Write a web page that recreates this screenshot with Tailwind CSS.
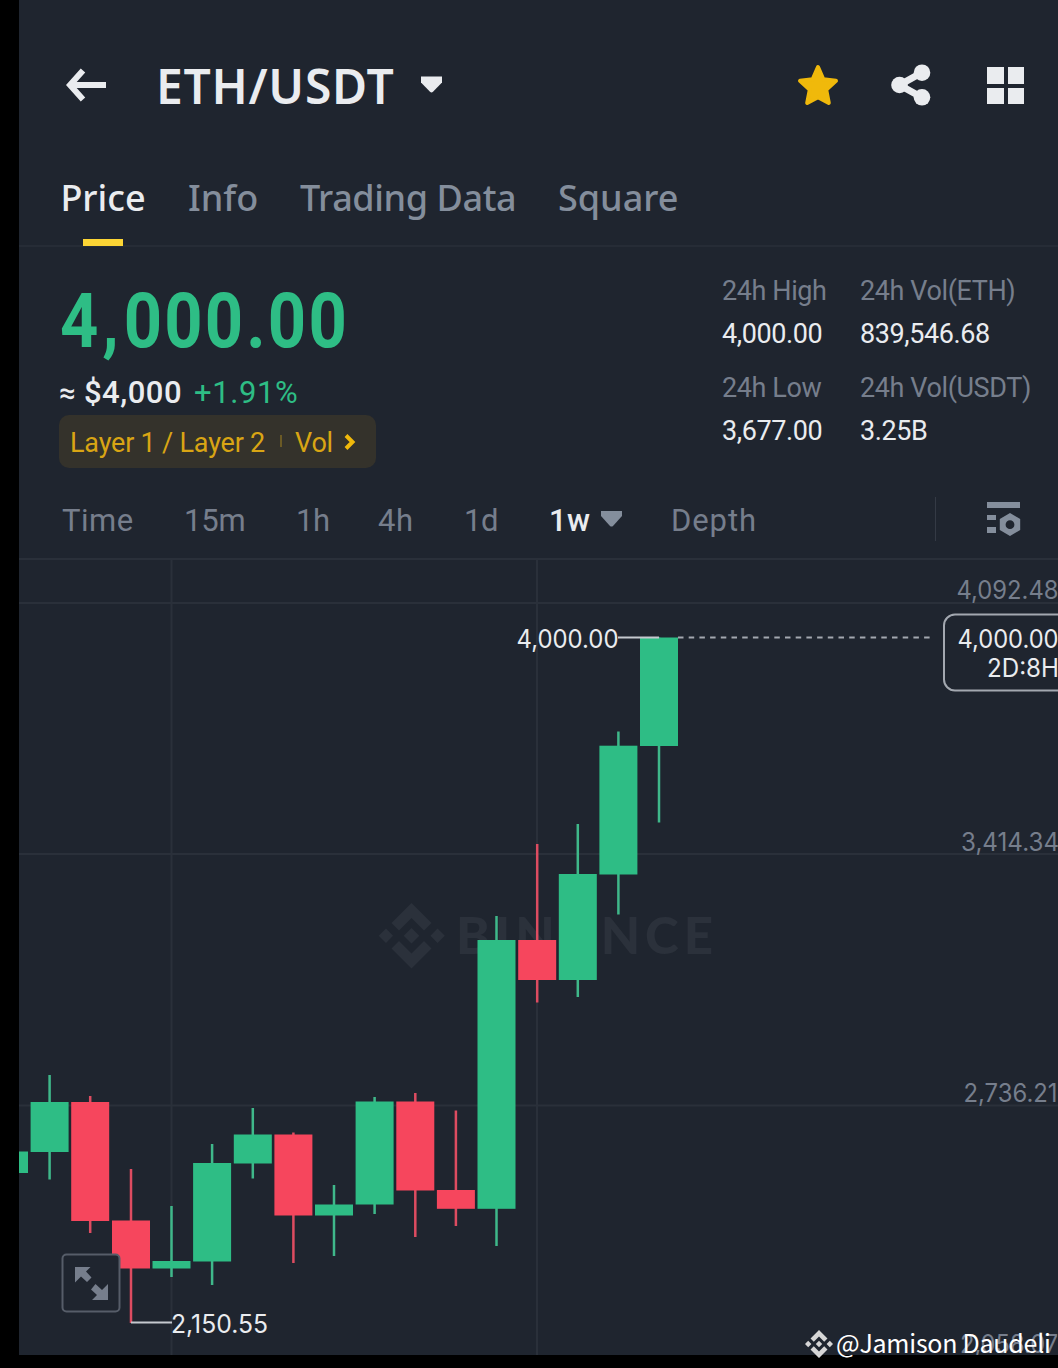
<!DOCTYPE html>
<html lang="en">

<head>
    <meta charset="UTF-8">
    <meta name="viewport" content="width=device-width, initial-scale=1.0">
    <title>ETH/USDT</title>
    <script src="https://cdn.jsdelivr.net/npm/@tailwindcss/browser@4"></script>
</head>

<body class="bg-black h-[1368px] overflow-hidden font-['Roboto',sans-serif]">
    <main class="ml-[19px] w-[1039px] h-[1355px] bg-[#1f252f] overflow-hidden">
        <!-- Header -->
        <header class="h-[172px] flex items-center pl-[47px] pr-[34px]">
            <svg class="w-[41px] h-[34px] -mt-[3px]" viewBox="0 0 41 34" fill="none" stroke="#eaecef" stroke-width="6">
                <path d="M40 17H4M17 2.500L4 17l13 14.500" />
            </svg>
            <h1 class="ml-[49px] w-[238px] text-[48px] leading-none font-semibold tracking-[0.700px] text-[#eaecef] font-['Noto_Sans',sans-serif]">ETH/USDT</h1>
            <svg class="ml-[27px] w-[22px] h-[17px] -mt-[3px]" viewBox="0 0 22 17" fill="#eaecef">
                <path d="M0 .5h21v6L12 15.8q-1.500 1.200-3 0L0 6.500z" />
            </svg>
            <div class="ml-auto flex items-center">
                <svg class="w-[42px] h-[42px] -mt-[2px]" viewBox="0 0 42 42" fill="#f0b90b" stroke="#f0b90b" stroke-width="4" stroke-linejoin="round">
                    <path d="M21 3l5.300 12.300L39 16.800l-9.800 8.900L31.800 39 21 33.200 10.200 39l2.600-13.300L3 16.800l12.700-1.500z" />
                </svg>
                <svg class="ml-[52px] w-[40px] h-[42px] -mt-[2px]" viewBox="0 0 40 42" fill="#eaecef">
                    <path d="M8.500 21L31 8.500M8.500 21L31 33.500" stroke="#eaecef" stroke-width="7" />
                    <circle cx="8.500" cy="21" r="8.300" />
                    <circle cx="31" cy="8.700" r="8.300" />
                    <circle cx="31" cy="33.300" r="8.300" />
                </svg>
                <div class="ml-[56px] -mt-[1px] grid grid-cols-2 gap-1">
                    <i class="size-[16.500px] bg-[#eaecef]"></i>
                    <i class="size-[16.500px] bg-[#eaecef]"></i>
                    <i class="size-[16.500px] bg-[#eaecef]"></i>
                    <i class="size-[16.500px] bg-[#eaecef]"></i>
                </div>
            </div>
        </header>

        <!-- Tabs -->
        <nav class="h-[75px] flex gap-[42px] pl-[41px] border-b-2 border-[#262c36] text-[36px] leading-[52px] font-medium text-[#848e9c] font-['Noto_Sans',sans-serif]">
            <div class="h-[74px] w-[86px] flex flex-col items-center justify-between text-[#eaecef]">
                <span>Price</span>
                <i class="w-10 h-[7px] bg-[#fcd535]"></i>
            </div>
            <span class="w-[70px]">Info</span>
            <span class="w-[216px] whitespace-nowrap tracking-[-0.400px]">Trading Data</span>
            <span>Square</span>
        </nav>

        <!-- Quote -->
        <section class="h-[233px] flex justify-between pl-10">
            <div class="w-[317px] pt-[34px]">
                <div class="ml-px w-[340px] origin-left scale-x-88 text-[76px] leading-[80px] font-bold tracking-[2.500px] text-[#2ebd85]">4<span class="ml-[2px] mr-[3px]">,</span>000<span class="ml-px">.</span>00</div>
                <div class="mt-[14px] flex items-center text-[31px] leading-[36px]">
                    <span class="w-[17px] text-[29px] font-medium text-[#eaecef]">≈</span>
                    <span class="ml-[8px] w-[98px] font-medium tracking-[0.500px] text-[#eaecef]">$4,000</span>
                    <span class="ml-[12px] tracking-[0.600px] text-[#2ebd85]">+1.91%</span>
                </div>
                <div class="mt-[4px] w-[317px] h-[53px] flex items-center pt-[3px] pl-[11px] rounded-[10px] bg-[#34322b] text-[27px] tracking-[-0.200px] text-[#d9a514]">
                    <span class="w-[196px] whitespace-nowrap">Layer 1 / Layer 2</span>
                    <i class="ml-[14px] -mt-[4px] w-0.5 h-3 bg-[#6b5a25]"></i>
                    <span class="ml-[13px] w-[38px]">Vol</span>
                    <svg class="ml-[11px] -mt-[3px] w-[12px] h-[16px]" viewBox="0 0 12 16" fill="none" stroke="#f0b90b" stroke-width="4">
                        <path d="M2 1.500L8.500 8 2 14.500" />
                    </svg>
                </div>
            </div>
            <dl class="w-[336px] pt-[27px] grid grid-cols-[138px_1fr] grid-rows-[97px_97px] text-[27px] leading-[34px] tracking-[-0.400px] whitespace-nowrap">
                <div>
                    <dt class="text-[#767e8c]">24h High</dt>
                    <dd class="mt-[9px] text-[#eaecef]">4,000.00</dd>
                </div>
                <div>
                    <dt class="text-[#767e8c]">24h Vol(ETH)</dt>
                    <dd class="mt-[9px] text-[#eaecef]">839,546.68</dd>
                </div>
                <div>
                    <dt class="text-[#767e8c]">24h Low</dt>
                    <dd class="mt-[9px] text-[#eaecef]">3,677.00</dd>
                </div>
                <div>
                    <dt class="text-[#767e8c]">24h Vol(USDT)</dt>
                    <dd class="mt-[9px] text-[#eaecef]">3.25B</dd>
                </div>
            </dl>
        </section>

        <!-- Intervals -->
        <nav class="h-[78px] flex items-center pl-[43px] pr-[37px] text-[31px] text-[#767e8c] tracking-[0.500px]">
            <span class="mt-1 w-[122px]">Time</span>
            <span class="mt-1 w-[112px] tracking-[-0.200px]">15m</span>
            <span class="mt-1 w-[82px] tracking-[-0.500px]">1h</span>
            <span class="mt-1 w-[86px]">4h</span>
            <span class="mt-1 w-[85px] tracking-[-0.500px]">1d</span>
            <span class="mt-1 w-[52px] font-medium text-[#eaecef]">1w</span>
            <svg class="w-[21px] h-[16px]" viewBox="0 0 21 16" fill="#848e9c">
                <path d="M0 0h21v5L12 15q-1.500 1.200-3 0L0 5z" />
            </svg>
            <span class="mt-1 ml-[49px] tracking-[0.900px]">Depth</span>
            <i class="ml-auto mr-[51px] w-px h-11 bg-[#343a45]"></i>
            <svg class="w-[34px] h-[34px]" viewBox="0 0 34 34" fill="#848e9c">
                <path d="M0 0h33v6H0zM0 13h9v5H0zM0 25h9v6H0z" />
                <path fill-rule="evenodd" d="M23 11l10.200 6v11L23 34l-10.200-6V17zM23 18.300a4.400 4.400 0 100 8.800 4.400 4.400 0 000-8.800z" />
            </svg>
        </nav>

        <!-- Chart -->
        <svg class="block w-[1039px] h-[797px]" viewBox="19 558 1039 797">
            <g stroke="#2a303a" stroke-width="2">
                <path d="M19 559H1058M19 603H1058M19 854H1058M19 1105.500H1058M171.500 558V1355M537 558V1355" />
            </g>
            <g fill="#2b313b">
                <path d="M411.500 903l20 20-7.500 7.500-12.500-12.500-12.500 12.500-7.500-7.500zM411.500 968.500l20-20-7.500-7.500-12.500 12.500-12.500-12.500-7.500 7.500zM411.500 928l7.800 7.800-7.800 7.800-7.800-7.800zM386 928.500l7 7.300-7 7.300-7.300-7.300zM437.500 928.500l7.300 7.300-7.300 7.300-7-7.300z" />
                <text x="456" y="954" textLength="257" font-family="Lato, sans-serif" font-weight="900" font-size="51">BINANCE</text>
            </g>
            <g id="candles"></g>
            <g font-family="Inter, sans-serif" font-size="25" fill="#767e8c">
                <text x="956.500" y="599" textLength="102" lengthAdjust="spacingAndGlyphs">4,092.48</text>
                <text x="961" y="850.500" textLength="98" lengthAdjust="spacingAndGlyphs">3,414.34</text>
                <text x="963.500" y="1101.500" textLength="94" lengthAdjust="spacingAndGlyphs">2,736.21</text>
                <text x="960" y="1353" textLength="98" lengthAdjust="spacingAndGlyphs">2,058.07</text>
            </g>
            <!-- Last price -->
            <path d="M678 637.500H932" stroke="#a3a8b0" stroke-width="1.800" stroke-dasharray="5.500 5.200" />
            <rect x="944" y="614.500" width="150" height="76" rx="11" fill="#1f252f" stroke="#a3a8b0" stroke-width="2" />
            <path d="M618 637.500H659M131 1322.500H172" stroke="#c5c9cf" stroke-width="1.800" />
            <g font-family="Inter, sans-serif" font-size="25" fill="#eaecef">
                <text x="957.500" y="647.500" textLength="101" lengthAdjust="spacingAndGlyphs">4,000.00</text>
                <text x="987" y="677" textLength="72" lengthAdjust="spacingAndGlyphs">2D:8H</text>
                <text x="516.500" y="647.500" textLength="102" lengthAdjust="spacingAndGlyphs">4,000.00</text>
                <text x="171" y="1333" textLength="97" lengthAdjust="spacingAndGlyphs">2,150.55</text>
            </g>
            <!-- Expand button -->
            <rect x="62.500" y="1254.500" width="57" height="57" rx="4" fill="#1f252f" stroke="#565d69" stroke-width="2" />
            <g fill="#767e8c">
                <path d="M75 1267h15.500l-4.500 4.500 5.500 6-4.500 4.500-6-5.500-6 6z" />
                <path d="M108 1300H92l5-5-6-5.500 4.500-5.500 6.500 6 6-6z" />
            </g>
        </svg>
    </main>

    <!-- Author mark -->
    <div class="absolute right-0 bottom-0 w-[253px] h-[48px] flex items-center text-white">
        <svg class="w-[28px] h-[28px] shrink-0" viewBox="0 0 28 28" fill="#d6d6d6">
            <path d="M14 0l8.500 8.500-3.300 3.300L14 6.600l-5.200 5.200-3.300-3.300zM14 28l8.500-8.500-3.300-3.300-5.200 5.200-5.200-5.200-3.300 3.300zM14 10.800l3.200 3.200-3.200 3.200-3.200-3.200zM3.200 10.800L6.400 14l-3.200 3.200L0 14zM24.800 10.800L28 14l-3.200 3.200-3.200-3.200z" />
        </svg>
        <span class="ml-[3px] -mt-[3px] text-[25px] leading-none tracking-[-0.250px] whitespace-nowrap font-['Noto_Sans_CJK_SC',sans-serif]">@Jamison Daudeli</span>
    </div>

    <script>
        // centre x, high, body top, body bottom, low, rising
        const candles = [
            [9, 1151.5, 1151.5, 1173, 1173, true],
            [49.6, 1075, 1102, 1152, 1179.5, true],
            [90.2, 1096, 1102, 1221, 1233, false],
            [131, 1169, 1220.5, 1268.5, 1323, false],
            [171.5, 1206, 1261, 1268.5, 1277, true],
            [212.1, 1144, 1163, 1261.5, 1285, true],
            [252.8, 1108, 1134.5, 1163.5, 1178.5, true],
            [293.4, 1132.5, 1134.5, 1215.5, 1263, false],
            [334, 1185, 1204.5, 1215.5, 1256, true],
            [374.6, 1097, 1101.5, 1204.5, 1214, true],
            [415.3, 1093, 1101.5, 1190.5, 1237, false],
            [455.9, 1110.5, 1190, 1208.8, 1226, false],
            [496.5, 916, 940, 1208.8, 1246, true],
            [537.2, 844, 940, 980, 1002.5, false],
            [577.8, 824, 874, 980, 997, true],
            [618.4, 731.5, 745.7, 874.5, 914.5, true],
            [659, 637.5, 637.5, 746, 822.5, true]
        ];

        document.getElementById('candles').innerHTML = candles.map(([x, high, top, bottom, low, up]) => `
            <rect x="${x - 1.25}" y="${high}" width="2.5" height="${low - high}" fill="${up ? '#3fb88a' : '#dd4c61'}" />
            <rect x="${x - 19}" y="${top}" width="38" height="${bottom - top}" fill="${up ? '#2ebd85' : '#f6465d'}" />
        `).join('');
    </script>
</body>

</html>
